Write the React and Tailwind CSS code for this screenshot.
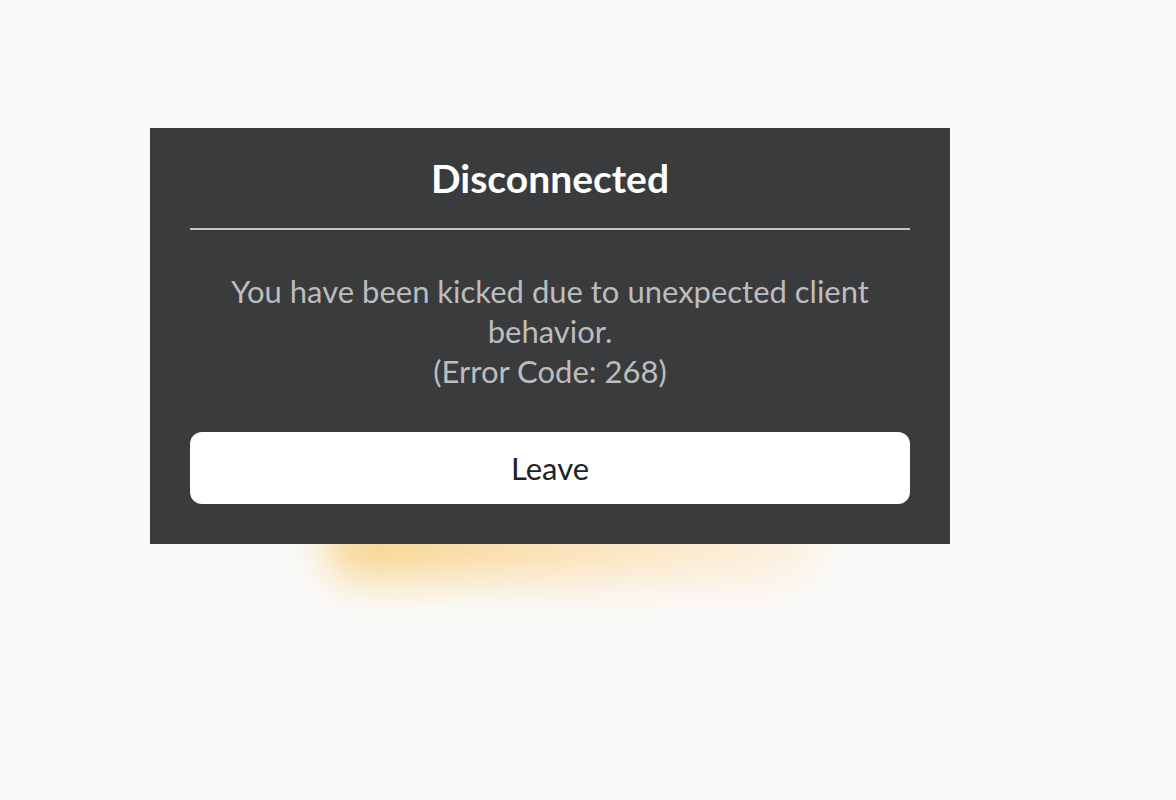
export default function App() {
  return (
    <div className="relative w-[1176px] h-[800px] bg-[#fafafa] overflow-hidden" style={{ fontFamily: "Lato, 'Noto Sans', sans-serif" }}>
      <div className="absolute left-[325px] top-[505px] w-[500px] h-[75px] rounded-full bg-gradient-to-r from-[#f6c96a] via-[#fbdca6] to-[#fdf0de] opacity-80 blur-[22px]" />
      <div className="absolute left-[150px] top-[128px] w-[800px] h-[416px] bg-[#393b3d] flex flex-col px-[40px]">
        <div className="h-[102px] shrink-0 flex items-center justify-center text-white text-[39px] font-bold border-b-2 border-[#c4c4c4]">
          Disconnected
        </div>
        <div className="pt-[41px] text-center text-[#bdbdbd] text-[31px] leading-[40px]">
          You have been kicked due to unexpected client behavior.
          <br />
          (Error Code: 268)
        </div>
        <button className="mt-[41px] h-[72px] shrink-0 w-full bg-white rounded-[12px] text-[#222] text-[31px]">
          Leave
        </button>
      </div>
    </div>
  );
}
